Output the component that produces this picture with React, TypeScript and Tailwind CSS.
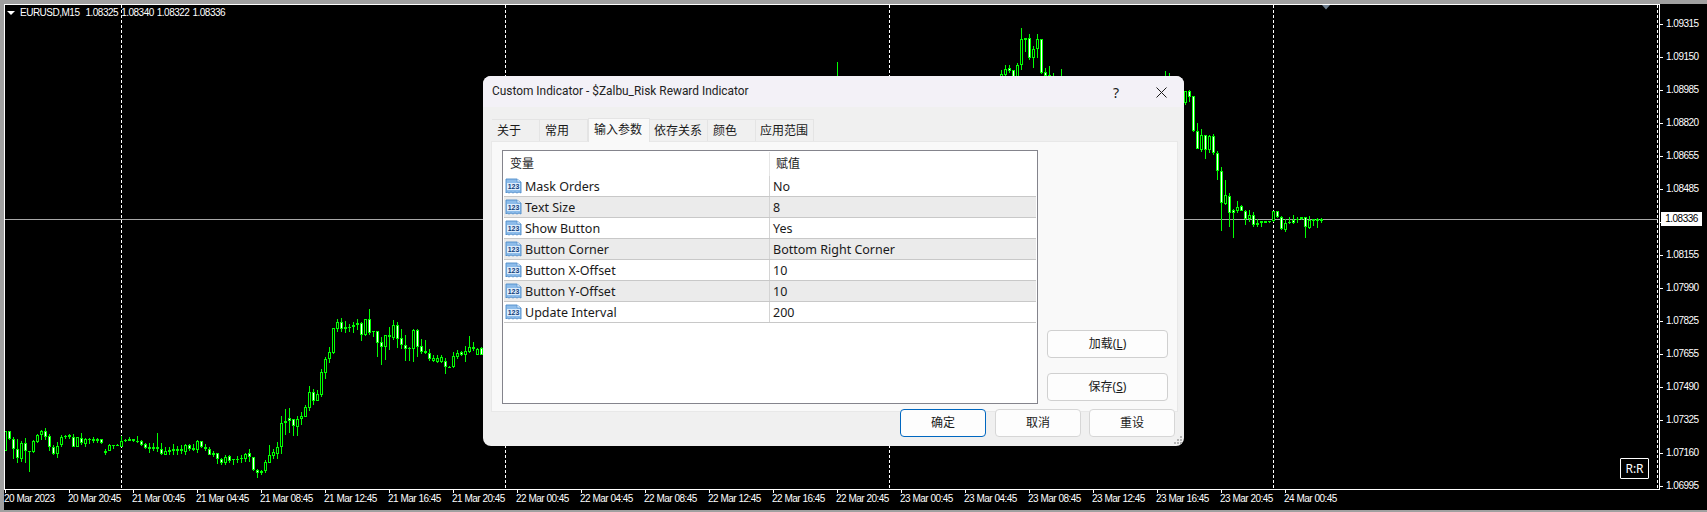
import React from "react";

type C = number[];
const zoneA: C[] = [
[424,424,482,484,0],[424,424,446,450,1],[440,446,476,506,1],[446,476,503,518,1],[454,460,506,516,0],[444,460,482,518,1],[482,482,486,545,1],[450,454,486,488,0],[432,436,456,460,0],[420,424,434,450,0],[414,424,442,450,1],[432,438,470,482,1],[466,472,492,496,1],[456,468,492,504,0],[434,442,466,470,0],[434,438,442,446,1],[432,436,442,448,1],[432,442,470,472,1],[440,442,470,472,0],[430,444,460,464,1],[444,448,462,470,0],[444,448,450,462,1],[442,448,452,458,1],[444,448,452,458,1],[446,448,460,462,1],[478,482,488,494,1],[462,466,482,484,0],[466,466,468,476,1],[462,464,464,466,1],[438,452,470,472,0],
[446,450,452,456,1],[440,448,452,454,1],[446,448,452,456,1],[438,452,456,458,1],[450,454,464,468,1],[458,462,474,476,1],[460,472,476,490,1],[458,472,476,484,1],[430,472,476,486,1],[458,476,492,496,1],[470,482,494,496,0],[470,480,486,496,1],[462,476,484,496,0],[468,476,484,494,1],[466,478,484,492,1],[462,466,486,494,0],[462,466,476,482,1],[462,474,480,484,1],[450,454,480,490,0],[452,454,470,474,1],[462,470,476,482,1],[472,476,494,496,1],[484,490,494,500,1],[490,490,506,522,1],[504,506,518,526,1],[496,500,518,526,0],[496,498,512,518,1],[506,508,510,524,1],[498,506,510,518,1],[496,504,508,518,1],
[488,492,506,516,0],[478,490,502,516,1],[502,502,540,544,1],[536,540,548,564,1],[540,542,548,554,1],[510,516,544,548,0],[466,496,518,520,0],[476,486,498,506,0],[456,472,492,506,0],[378,400,472,492,0],[358,392,400,436,1],[354,384,392,430,1],[386,386,408,438,1],[378,388,410,438,0],[366,378,388,404,0],[344,352,380,382,0],[288,306,354,362,0],[296,306,332,346,1],[300,312,332,334,0],[236,246,316,320,0],[200,206,248,268,0],[172,186,208,218,0],[114,114,190,192,0],[86,96,116,126,0],[84,96,116,126,1],[94,110,116,130,1],[102,112,114,126,1],[96,106,112,130,1],[88,100,106,120,1],[96,100,136,152,1],
[88,88,136,138,0],[58,88,130,136,1],[124,124,126,140,1],[122,124,158,200,1],[140,156,170,224,1],[136,136,170,210,0],[112,136,142,180,1],[90,106,144,150,0],[96,106,148,174,1],[116,144,166,178,1],[134,166,176,212,1],[170,174,176,214,1],[118,120,176,216,0],[118,120,172,200,1],[148,168,186,192,1],[150,182,190,192,1],[176,190,206,212,1],[196,204,214,216,0],[196,204,216,218,0],[196,202,216,218,0],[204,214,230,252,1],[228,230,232,234,1],[186,198,232,234,0],[180,188,200,208,0],[184,186,196,198,1],[168,184,196,216,0],[138,172,186,188,0],[156,172,176,184,1],[174,176,194,194,0],[170,174,194,194,1],
];
const zoneB: C[] = [
[70,168,172,172,172,0],[154,150,162,172,172,0],[166,136,146,164,172,0],[178,136,144,152,160,1],[190,150,150,172,172,1],[202,130,136,172,172,0],[214,24,58,136,150,0],[226,54,54,60,95,1],[238,42,54,114,120,1],[250,78,86,114,144,0],[262,42,58,86,114,0],[274,58,58,158,162,1],[286,145,156,168,172,1],[298,138,166,172,172,1],[310,158,172,172,172,0],[334,147,172,172,172,0],[646,154,172,172,172,0],[658,160,172,172,172,0],
];
const zoneC: C[] = [
[272,274,310,314,0],[270,274,290,305,1],[288,288,394,396,1],[370,394,446,448,1],[388,406,450,456,0],[406,406,450,476,1],[406,408,450,458,0],[402,408,458,464,1],[452,458,514,540,1],[502,514,610,692,1],[540,586,612,614,0],[580,588,640,682,1],[626,630,638,714,1],[604,622,634,638,0],[616,618,632,634,1],[630,632,656,674,1],[630,646,656,666,0],[636,644,676,680,1],[656,670,676,682,1],[662,664,670,680,1],[664,664,668,670,1],[662,664,666,668,1],[632,634,664,666,0],[634,634,650,654,1],[648,650,688,690,1],[658,670,690,696,0],[652,666,670,672,1],[646,660,668,672,1],[652,656,660,668,1],[650,652,656,660,1],[650,652,682,714,1],[648,660,684,688,0],[656,658,662,678,1],[654,658,664,684,1],[654,658,664,670,1],
];

function Candle({ x, h, t, b, l, f }: { x: number; h: number; t: number; b: number; l: number; f: number }) {
  const bh = Math.max(b - t, 1);
  return (
    <g>
      <rect x={x} y={h} width={1} height={Math.max(l - h, 1)} fill="#00ff00" />
      <rect x={x - 1} y={t} width={3} height={bh} fill="#00ff00" />
      {bh >= 3 && <rect x={x} y={t + 1} width={1} height={bh - 2} fill={f ? "#ffffff" : "#000000"} />}
    </g>
  );
}

function Chart() {
  const r = Math.round;
  return (
    <svg className="absolute inset-0 block" width={1654} height={484} viewBox="5 5 1654 484" shapeRendering="crispEdges">
      <line x1={5} x2={1658} y1={219.5} y2={219.5} stroke="#a8a8a8" />
      {[121, 505, 889, 1273, 1657].map((x) => (
        <line key={x} x1={x + 0.5} x2={x + 0.5} y1={5} y2={489} stroke="#ffffff" strokeDasharray="3 2" />
      ))}
      {zoneA.map((c, i) => (
        <Candle key={"a" + i} x={5 + 4 * i} h={r(290 + c[0] / 3)} t={r(290 + c[1] / 3)} b={r(290 + c[2] / 3)} l={r(290 + c[3] / 3)} f={c[4]} />
      ))}
      <rect x={837} y={62} width={1} height={14} fill="#00ff00" />
      {zoneB.map((c, i) => (
        <Candle key={"b" + i} x={r(950 + c[0] / 3)} h={r(20 + c[1] / 3)} t={r(20 + c[2] / 3)} b={r(20 + c[3] / 3)} l={r(20 + c[4] / 3)} f={c[5]} />
      ))}
      {zoneC.map((c, i) => (
        <Candle key={"c" + i} x={1185 + 4 * i} h={r(c[0] / 3)} t={r(c[1] / 3)} b={r(c[2] / 3)} l={r(c[3] / 3)} f={c[4]} />
      ))}
      <polygon points="1322,5 1330,5 1326,9.5" fill="#708090" shapeRendering="auto" />
    </svg>
  );
}

const prices = ["1.09315","1.09150","1.08985","1.08820","1.08655","1.08485","1.08320","1.08155","1.07990","1.07825","1.07655","1.07490","1.07325","1.07160","1.06995"];
const times = ["20 Mar 2023","20 Mar 20:45","21 Mar 00:45","21 Mar 04:45","21 Mar 08:45","21 Mar 12:45","21 Mar 16:45","21 Mar 20:45","22 Mar 00:45","22 Mar 04:45","22 Mar 08:45","22 Mar 12:45","22 Mar 16:45","22 Mar 20:45","23 Mar 00:45","23 Mar 04:45","23 Mar 08:45","23 Mar 12:45","23 Mar 16:45","23 Mar 20:45","24 Mar 00:45"];
const tabs = [
  { t: "关于", w: "w-[48px]" },
  { t: "常用", w: "w-[48px]" },
  { t: "输入参数", w: "w-[62px]", on: true },
  { t: "依存关系", w: "w-[58px]" },
  { t: "颜色", w: "w-[48px]" },
  { t: "应用范围", w: "w-[58px]" },
];
const rows = [
  ["Mask Orders", "No"],
  ["Text Size", "8"],
  ["Show Button", "Yes"],
  ["Button Corner", "Bottom Right Corner"],
  ["Button X-Offset", "10"],
  ["Button Y-Offset", "10"],
  ["Update Interval", "200"],
];

function DocIcon() {
  return (
    <svg width="17" height="16" viewBox="0 0 17 16" className="shrink-0">
      <path d="M1 1H12L16 4V15L14 14L12 15L10 14L8 15L6 14L4 15L2 14L1 15Z" fill="#8dbcea" stroke="#4f8cca" strokeWidth="0.9" />
      <path d="M12 1L12 4H16" fill="#d6e9fa" stroke="#4f8cca" strokeWidth="0.6" />
      <rect x="2" y="5" width="13" height="7" fill="#dcecfb" />
      <text x="8.5" y="11" textAnchor="middle" fontSize="7" fontWeight="700" fontFamily="'Liberation Sans',sans-serif" fill="#123f7c">123</text>
    </svg>
  );
}

function Btn({ children, cls = "" }: { children: React.ReactNode; cls?: string }) {
  return (
    <div className={"flex items-center justify-center h-[28px] rounded-[4px] border bg-[#fdfdfd] text-[12px] text-[#1a1a1a] " + cls}>
      {children}
    </div>
  );
}

function Dialog() {
  return (
    <div className="absolute left-[483px] top-[76px] w-[701px] h-[370px] rounded-[8px] overflow-hidden bg-[#f0f0f0] flex flex-col font-['Noto_Sans','Noto_Sans_CJK_SC',sans-serif] text-[#1a1a1a]">
      <div className="h-[31px] bg-[#f3f1f7] flex items-center pl-[9px] pt-px shrink-0">
        <span className="text-[11.9px] flex-1 font-['Roboto','Noto_Sans_CJK_SC',sans-serif] text-[#222222]">Custom Indicator - $Zalbu_Risk Reward Indicator</span>
        <span className="text-[14px] mr-[37px]">?</span>
        <svg width="11" height="11" viewBox="0 0 11 11" className="mr-[17px]">
          <path d="M0.5 0.5L10.5 10.5M10.5 0.5L0.5 10.5" stroke="#1a1a1a" strokeWidth="1" />
        </svg>
      </div>
      <div className="flex items-end pl-[9px] h-[34px] shrink-0 text-[12px]">
        {tabs.map((x) =>
          x.on ? (
            <div key={x.t} className={x.w + " h-[24px] bg-[#f9f9f9] border border-b-0 border-[#e4e4e4] flex items-center pl-[5px] pb-[2px] relative -mb-px z-10"}>{x.t}</div>
          ) : (
            <div key={x.t} className={x.w + " h-[22px] border border-b-0 border-l-0 border-[#e4e4e4] flex items-center justify-start " + (x.t.length > 2 ? "pl-[4px]" : "pl-[5px]")}>{x.t}</div>
          )
        )}
      </div>
      <div className="ml-[8px] w-[687px] h-[271px] shrink-0 bg-[#f9f9f9] border border-[#e8e8e8] flex pl-[10px] pt-[8px]">
        <div className="w-[536px] h-[254px] border border-[#84848c] bg-white p-px flex flex-col shrink-0">
          <div className="h-[24px] flex shrink-0 text-[12px]">
            <div className="w-[265px] pl-[6px] flex items-center">变量</div>
            <div className="flex-1 border-l border-[#e6e6e6] pl-[6px] flex items-center">赋值</div>
          </div>
          {rows.map((r, i) => (
            <div key={r[0]} className={"h-[21px] flex shrink-0 border-b border-[#c8c8c8] text-[12.5px] " + (i % 2 ? "bg-[#ebebeb]" : "bg-white")}>
              <div className="w-[265px] flex items-center gap-[3px] pl-px">
                <DocIcon />
                <span className="pt-[2px]">{r[0]}</span>
              </div>
              <div className="flex-1 border-l border-[#d4d4d4] pl-[3px] pt-[2px] flex items-center">{r[1]}</div>
            </div>
          ))}
        </div>
        <div className="ml-[9px] w-[121px] h-[254px] flex flex-col justify-end gap-[15px] pb-[3px]">
          <Btn cls="border-[#d0d0d0]"><span>加载(<u>L</u>)</span></Btn>
          <Btn cls="border-[#d0d0d0]"><span>保存(<u>S</u>)</span></Btn>
        </div>
      </div>
      <div className="-mt-[3px] flex justify-end pr-[9px] relative z-10">
        <Btn cls="w-[86px] mr-[9px] border-[#0067c0] border-[1.5px]">确定</Btn>
        <Btn cls="w-[86px] mr-[8px] border-[#d6d6d6]">取消</Btn>
        <Btn cls="w-[86px] border-[#d6d6d6]">重设</Btn>
      </div>
      <div className="absolute right-[2px] bottom-[2px] grid grid-cols-3 gap-px w-[8px] h-[8px]">
        <i /><i /><i className="bg-[#b4b4b4]" />
        <i /><i className="bg-[#b4b4b4]" /><i className="bg-[#b4b4b4]" />
        <i className="bg-[#b4b4b4]" /><i className="bg-[#b4b4b4]" /><i className="bg-[#b4b4b4]" />
      </div>
    </div>
  );
}

export default function App() {
  const axis = "font-['Liberation_Sans',sans-serif] text-[10px] tracking-[-0.5px] text-white leading-none whitespace-nowrap";
  return (
    <div className="relative w-[1707px] h-[512px] overflow-hidden bg-[#a0a0a0] pt-[4px] pb-[2px] flex flex-col">
      <div className="flex-1 ml-[4px] bg-black flex flex-col relative">
        <div className="flex h-[486px]">
          <div className="relative w-[1656px] h-[486px] border border-white shrink-0">
            <Chart />
            <div className={axis + " absolute left-[2px] top-[3px] flex items-center h-[10px]"}>
              <svg width="8" height="4" viewBox="0 0 8 4" className="mr-[5px]"><polygon points="0,0 8,0 4,4" fill="#fff" /></svg>
              <span className="mr-[6px]">EURUSD,M15</span>
              <span className="mr-[3px]">1.08325</span>
              <span className="mr-[3px]">1.08340</span>
              <span className="mr-[3px]">1.08322</span>
              <span>1.08336</span>
            </div>
            <div className="absolute right-[10px] top-[453px] w-[29px] h-[21px] border border-white rounded-[1px] flex items-center justify-center font-['Noto_Sans',sans-serif] text-[12px] text-white">R:R</div>
          </div>
          <div className="flex-1 flex flex-col pt-[3.5px] relative">
            {prices.map((p) => (
              <div key={p} className={axis + " h-[33px] flex items-center shrink-0"}>
                <span className="w-[3px] h-px bg-white mr-[3px]" />
                <span>{p}</span>
              </div>
            ))}
            <div className="absolute left-px top-[208px] w-[41px] h-[14px] bg-white flex items-center justify-center font-['Liberation_Sans',sans-serif] text-[10px] tracking-[-0.5px] text-black leading-none">1.08336</div>
          </div>
        </div>
        <div className="flex-1 flex pl-0">
          {times.map((t) => (
            <div key={t} className={axis + " w-[64px] shrink-0"}>
              <div className="w-px h-[3px] bg-white ml-px" />
              <div className="pt-px">{t}</div>
            </div>
          ))}
        </div>
      </div>
      <Dialog />
    </div>
  );
}
